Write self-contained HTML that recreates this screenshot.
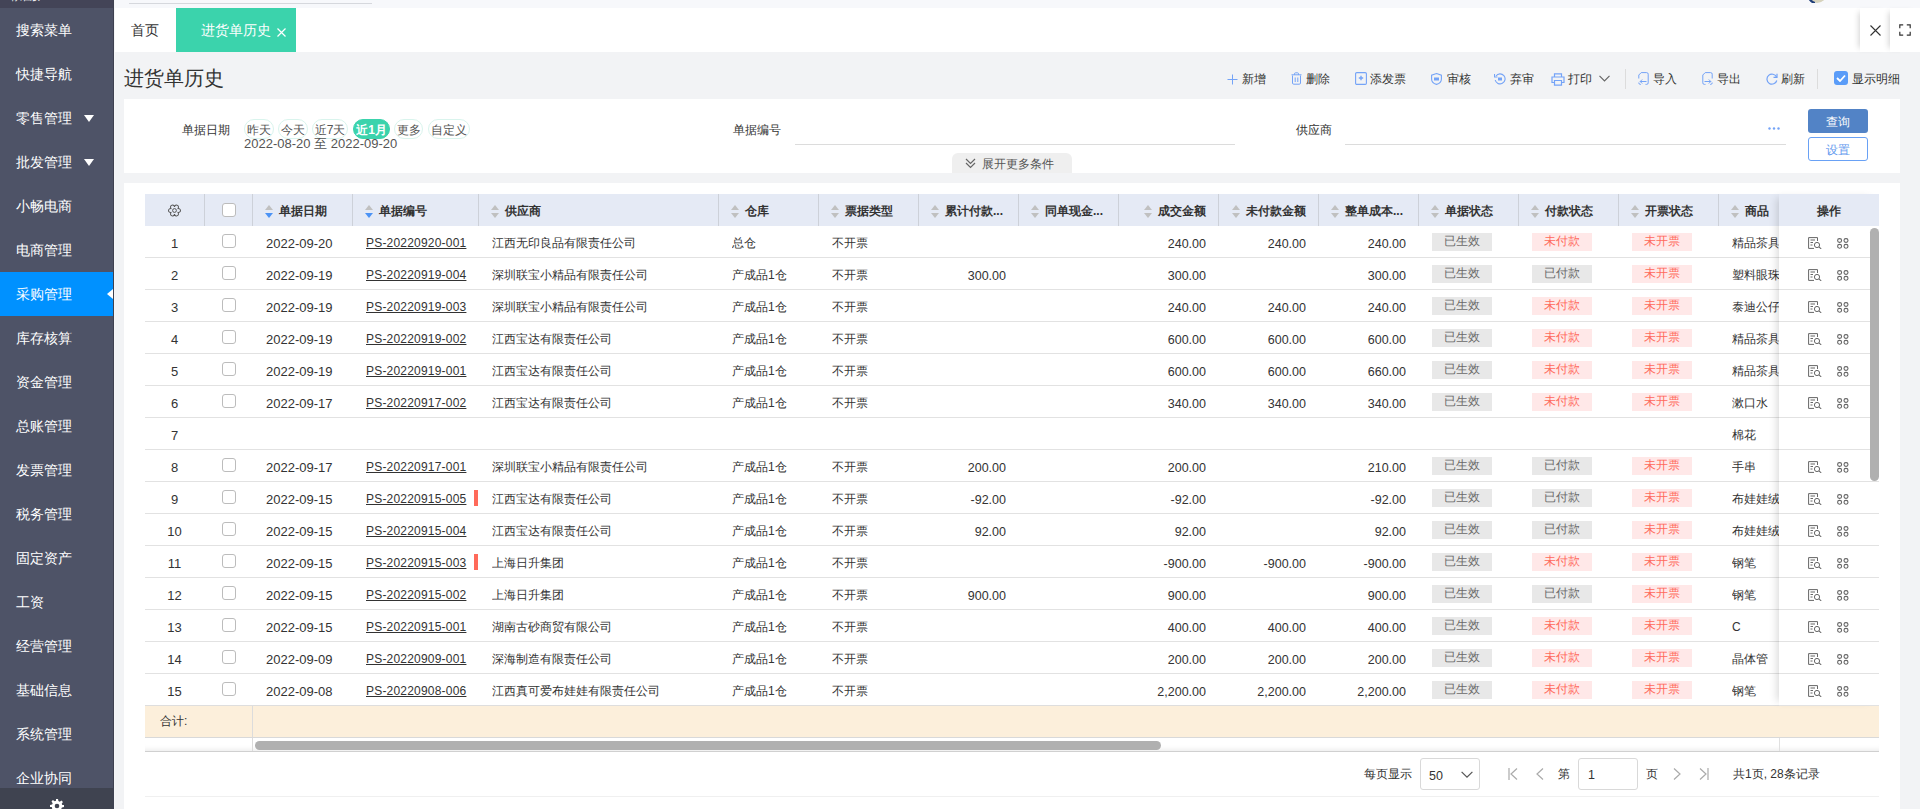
<!DOCTYPE html><html><head><meta charset="utf-8"><style>
*{box-sizing:border-box;margin:0;padding:0}
html,body{width:1920px;height:809px;overflow:hidden}
body{position:relative;background:#f2f3f5;font-family:"Liberation Sans",sans-serif;color:#333;font-size:12px}
.abs{position:absolute}
#side{left:0;top:0;width:114px;height:809px;background:#4e5367;border-right:1px solid #3e4150}
#side .top{left:0;top:0;width:113px;height:8px;background:#434457;overflow:hidden}
#side .top span{position:absolute;left:10px;top:-9px;color:#fff;font-size:10px;line-height:12px}
.mi{position:absolute;left:0;width:113px;height:44px;color:#fff;font-size:14px;line-height:44px;padding-left:16px}
.mi.on{background:#0091ff}
.mi .dd{position:absolute;left:84px;top:19px;width:0;height:0;border-left:5px solid transparent;border-right:5px solid transparent;border-top:7px solid #fff}
.mi .ar{position:absolute;right:0;top:17px;width:0;height:0;border-top:5px solid transparent;border-bottom:5px solid transparent;border-right:6px solid #fff}
#side .bot{left:0;top:788px;width:113px;height:21px;background:#3f4350}
#wl{left:114px;top:0;width:1px;height:809px;background:#f4f5f7}
#hdr{left:115px;top:0;width:1805px;height:8px;background:#f7f8fb}
#hdr .ln{left:14px;top:3px;width:243px;height:1px;background:#d6d8dd}
#tabs{left:115px;top:8px;width:1805px;height:44px;background:#fff}
.tab{position:absolute;top:0;height:44px;line-height:44px;font-size:14px}
.toolbar{top:67px;height:24px;font-size:12px;line-height:24px}
.tb{position:absolute;top:0;height:24px;white-space:nowrap}
.tb span{position:absolute;top:0}
#search{left:124px;top:99px;width:1776px;height:74px;background:#fff}
.lbl{position:absolute;font-size:12px;line-height:16px;color:#333}
.pill{position:absolute;top:20px;height:20px;border:1px solid #d9f4ed;border-radius:10px;font-size:12px;line-height:21px;color:#555;text-align:center}
.pill.on{background:#3bd3ac;border-color:#3bd3ac;color:#fff;font-weight:bold}
.uline{position:absolute;height:1px;background:#dcdcdc}
#card{left:124px;top:183px;width:1776px;height:626px;background:#fff}
#tbl{left:145px;top:194px;width:1734px;height:558px;overflow:hidden}
.th{position:absolute;top:0;height:32px;background:#e5eaf5;font-weight:bold;font-size:12px;line-height:32px;color:#333;white-space:nowrap;overflow:hidden}
.th .sep{position:absolute;left:0;top:0;width:1px;height:32px;background:#cdd1d9}
.sa{position:absolute;top:11px;width:8px;height:13px}
.sa:before{content:"";position:absolute;left:0;top:0;border-left:4px solid transparent;border-right:4px solid transparent;border-bottom:5px solid #c0c0c0}
.sa:after{content:"";position:absolute;left:0;top:8px;border-left:4px solid transparent;border-right:4px solid transparent;border-top:5px solid #c0c0c0}
.sa.b:after{border-top-color:#4c93f5}
.row{position:absolute;left:0;width:1734px;height:32px;border-bottom:1px solid #e2e2e2}
.c{position:absolute;top:3px;height:29px;line-height:29px;font-size:12px;color:#333;white-space:nowrap;overflow:hidden}
.num{font-size:13px}
.lnk{text-decoration:underline}
.cb{position:absolute;width:14px;height:14px;border:1px solid #bcbcbc;border-radius:3px;background:#fff}
.tag{position:absolute;top:7px;width:60px;height:18px;line-height:17px;text-align:center;font-size:12px}
.tg{background:#e8e8e8;color:#6a6a6a}
.tr{background:#ffe8e8;color:#ff6a5c}
#fix{left:1779px;top:194px;width:100px;height:511px;background:#fff;box-shadow:-6px 0 8px -4px rgba(0,0,0,0.15)}
</style></head><body><div id="side" class="abs"><div class="top abs"><span>标准版</span></div><div class="mi" style="top:8px">搜索菜单</div><div class="mi" style="top:52px">快捷导航</div><div class="mi" style="top:96px">零售管理<i class="dd"></i></div><div class="mi" style="top:140px">批发管理<i class="dd"></i></div><div class="mi" style="top:184px">小畅电商</div><div class="mi" style="top:228px">电商管理</div><div class="mi on" style="top:272px">采购管理<i class="ar"></i></div><div class="mi" style="top:316px">库存核算</div><div class="mi" style="top:360px">资金管理</div><div class="mi" style="top:404px">总账管理</div><div class="mi" style="top:448px">发票管理</div><div class="mi" style="top:492px">税务管理</div><div class="mi" style="top:536px">固定资产</div><div class="mi" style="top:580px">工资</div><div class="mi" style="top:624px">经营管理</div><div class="mi" style="top:668px">基础信息</div><div class="mi" style="top:712px">系统管理</div><div class="mi" style="top:756px">企业协同</div><div class="bot abs"><svg class="abs" style="left:50px;top:11px" width="14" height="14" viewBox="0 0 14 14"><path fill="#fff" d="M6 0h2l.4 2.1 1.3.6 1.8-1.2 1.4 1.4-1.2 1.8.6 1.3L14 6v2l-2.1.4-.6 1.3 1.2 1.8-1.4 1.4-1.8-1.2-1.3.6L8 14H6l-.4-2.1-1.3-.6-1.8 1.2-1.4-1.4 1.2-1.8-.6-1.3L0 8V6l2.1-.4.6-1.3-1.2-1.8 1.4-1.4 1.8 1.2 1.3-.6z"/><circle cx="7" cy="7" r="2.3" fill="#3f4350"/></svg></div></div><div id="wl" class="abs"></div><div id="hdr" class="abs"><div class="ln abs"></div></div><svg class="abs" style="left:1807px;top:-16px" width="20" height="19"><circle cx="10" cy="9.5" r="9.5" fill="#d6d2bc"/><path d="M2.5 15 Q5 18.5 8 19" stroke="#1f3e78" stroke-width="2.2" fill="none"/></svg><div id="tabs" class="abs"><div class="tab" style="left:16px;width:50px;color:#333">首页</div><div class="tab" style="left:61px;width:120px;background:#3bd3ac;color:#fff;padding-left:25px">进货单历史<svg class="abs" style="left:101px;top:20px" width="9" height="9"><path d="M0.5 0.5L8.5 8.5M8.5 0.5L0.5 8.5" stroke="#fff" stroke-width="1.2"/></svg></div><div class="abs" style="left:1745px;top:0;width:30px;height:44px;background:#fff;box-shadow:-5px 0 6px -4px rgba(0,0,0,.18)"><svg class="abs" style="left:10px;top:17px" width="11" height="11"><path d="M0.5 0.5L10.5 10.5M10.5 0.5L0.5 10.5" stroke="#333" stroke-width="1.1"/></svg></div><div class="abs" style="left:1775px;top:0;width:30px;height:44px;background:#fff;box-shadow:-5px 0 6px -4px rgba(0,0,0,.18)"><svg class="abs" style="left:9px;top:16px" width="12" height="12"><path d="M0.8 4.2V0.8H4.2M7.8 0.8H11.2V4.2M11.2 7.8V11.2H7.8M4.2 11.2H0.8V7.8" stroke="#333" stroke-width="1.2" fill="none"/></svg></div></div><div class="abs" style="left:124px;top:63px;font-size:20px;line-height:30px;color:#333">进货单历史</div><div class="abs toolbar" style="left:0;width:1920px"><div class="tb" style="left:0"><span style="left:1227px;top:7px;line-height:0"><svg width="11" height="11" viewBox="0 0 11 11"><path d="M5.5 0.5V10.5M0.5 5.5H10.5" stroke="#74a3f7" stroke-width="1"/></svg></span><span style="left:1242px">新增</span></div><div class="tb" style="left:0"><span style="left:1291px;top:5px;line-height:0"><svg width="11" height="13" viewBox="0 0 11 13"><path d="M1.5 3.5V11A1.2 1.2 0 0 0 2.7 12.2H8.3A1.2 1.2 0 0 0 9.5 11V3.5 M0.5 2.8H10.5 M3.5 2.8V1.8A1 1 0 0 1 4.5 0.8H6.5A1 1 0 0 1 7.5 1.8V2.8 M4.2 5.5V10 M6.8 5.5V10" stroke="#74a3f7" stroke-width="1" fill="none"/></svg></span><span style="left:1306px">删除</span></div><div class="tb" style="left:0"><span style="left:1355px;top:5px;line-height:0"><svg width="12" height="13" viewBox="0 0 12 13"><rect x="0.6" y="0.6" width="10.8" height="11.8" rx="1.2" stroke="#74a3f7" stroke-width="1.1" fill="none"/><path d="M6 3.8V8.2 M3.8 6H8.2" stroke="#74a3f7" stroke-width="1.4" fill="none"/></svg></span><span style="left:1370px">添发票</span></div><div class="tb" style="left:0"><span style="left:1431px;top:6px;line-height:0"><svg width="11" height="12" viewBox="0 0 11 12"><path d="M5.5 0.6L10.4 2.2V6C10.4 8.8 8 10.8 5.5 11.4C3 10.8 0.6 8.8 0.6 6V2.2Z" stroke="#74a3f7" stroke-width="1.1" fill="none"/><path d="M3 4.5H8V7.5H3Z" fill="#74a3f7"/></svg></span><span style="left:1447px">审核</span></div><div class="tb" style="left:0"><span style="left:1494px;top:6px;line-height:0"><svg width="12" height="12" viewBox="0 0 12 12"><path d="M2 3A5 5 0 1 1 1.2 7" stroke="#74a3f7" stroke-width="1.1" fill="none"/><path d="M0.5 1V4H3.5" stroke="#74a3f7" stroke-width="1.1" fill="none"/><path d="M4 4.5H8V7.5H4Z" fill="#74a3f7"/></svg></span><span style="left:1510px">弃审</span></div><div class="tb" style="left:0"><span style="left:1551px;top:6px;line-height:0"><svg width="14" height="13" viewBox="0 0 14 13"><path d="M3.5 4V0.8H10.5V4 M3.5 9.5H1V4H13V9.5H10.5 M3.5 7.5H10.5V12.2H3.5Z" stroke="#74a3f7" stroke-width="1.2" fill="none"/></svg></span><span style="left:1568px">打印</span></div><div class="tb" style="left:0"><span style="left:1638px;top:5px;line-height:0"><svg width="11" height="13" viewBox="0 0 11 13"><path d="M3.2 0.6H8.6A1.6 1.6 0 0 1 10.2 2.2V10.8A1.6 1.6 0 0 1 8.6 12.4H7.5 M3.2 0.6L0.8 3V6.5 M0.8 10.5V10.8A1.6 1.6 0 0 0 2.4 12.4H3" stroke="#74a3f7" stroke-width="1" fill="none"/><path d="M8.5 9.5H2.2M4.2 7.5L2.2 9.5L4.2 11.5" stroke="#74a3f7" stroke-width="1" fill="none"/></svg></span><span style="left:1653px">导入</span></div><div class="tb" style="left:0"><span style="left:1702px;top:5px;line-height:0"><svg width="11" height="13" viewBox="0 0 11 13"><path d="M3.2 0.6H8.6A1.6 1.6 0 0 1 10.2 2.2V6.5 M10.2 10.5V10.8A1.6 1.6 0 0 1 8.6 12.4H8 M3.2 0.6L0.8 3V10.8A1.6 1.6 0 0 0 2.4 12.4H3.5" stroke="#74a3f7" stroke-width="1" fill="none"/><path d="M2.5 9.5H8.8M6.8 7.5L8.8 9.5L6.8 11.5" stroke="#74a3f7" stroke-width="1" fill="none"/></svg></span><span style="left:1717px">导出</span></div><div class="tb" style="left:0"><span style="left:1766px;top:6px;line-height:0"><svg width="12" height="12" viewBox="0 0 12 12"><path d="M10.5 4A5 5 0 1 0 10.8 7.5" stroke="#74a3f7" stroke-width="1.2" fill="none"/><path d="M11 0.8V4.3H7.5" stroke="#74a3f7" stroke-width="1.2" fill="none"/></svg></span><span style="left:1781px">刷新</span></div><svg class="abs" style="left:1599px;top:8px" width="11" height="7"><path d="M0.5 0.8L5.5 5.8L10.5 0.8" stroke="#666" stroke-width="1.2" fill="none"/></svg><div class="abs" style="left:1625px;top:2px;width:1px;height:20px;background:#dcdcdc"></div><div class="abs" style="left:1817px;top:2px;width:1px;height:20px;background:#dcdcdc"></div><div class="abs" style="left:1834px;top:4px;width:14px;height:14px;background:#5a9cf8;border-radius:3px"><svg class="abs" style="left:2px;top:3px" width="10" height="8"><path d="M1 4L4 7L9 1.5" stroke="#fff" stroke-width="1.8" fill="none"/></svg></div><span class="abs" style="left:1852px;top:0">显示明细</span></div><div id="search" class="abs"><div class="lbl" style="left:58px;top:23px">单据日期</div><div class="pill" style="left:120px;width:30px">昨天</div><div class="pill" style="left:154px;width:30px">今天</div><div class="pill" style="left:188px;width:36px">近7天</div><div class="pill on" style="left:229px;width:37px">近1月</div><div class="pill" style="left:270px;width:29px">更多</div><div class="pill" style="left:304px;width:42px">自定义</div><div class="abs" style="left:120px;top:37px;font-size:13px;line-height:16px;color:#555">2022-08-20 至 2022-09-20</div><div class="lbl" style="left:609px;top:23px">单据编号</div><div class="uline" style="left:671px;top:45px;width:440px"></div><div class="lbl" style="left:1172px;top:23px">供应商</div><div class="uline" style="left:1221px;top:45px;width:441px"></div><div class="abs" style="left:1644px;top:28px;width:12px;height:3px"><svg width="12" height="3" style="display:block"><circle cx="1.5" cy="1.5" r="1.2" fill="#74a3f7"/><circle cx="6" cy="1.5" r="1.2" fill="#74a3f7"/><circle cx="10.5" cy="1.5" r="1.2" fill="#74a3f7"/></svg></div><div class="abs" style="left:1684px;top:10px;width:60px;height:24px;background:#5283c6;border-radius:3px;color:#fff;font-size:12px;line-height:26px;text-align:center">查询</div><div class="abs" style="left:1684px;top:38px;width:60px;height:24px;border:1px solid #69a1f5;border-radius:3px;color:#5f98ee;font-size:12px;line-height:25px;text-align:center">设置</div><div class="abs" style="left:828px;top:54px;width:120px;height:20px;background:#efefef;border-radius:6px 6px 0 0;font-size:12px;line-height:20px;color:#555"><svg class="abs" style="left:13px;top:5px" width="11" height="11"><path d="M1 1L5.5 5.5L10 1M1 5L5.5 9.5L10 5" stroke="#666" stroke-width="1.2" fill="none"/></svg><span class="abs" style="left:30px;top:1px">展开更多条件</span></div></div><div id="card" class="abs"></div><div id="tbl" class="abs"><div class="th" style="left:0px;width:59px"><svg class="abs" style="left:23px;top:10px" width="13" height="13" viewBox="0 0 13 13"><path d="M4.70 3.38A2.0 2.0 0 1 1 8.30 3.38A2.0 2.0 0 1 1 10.10 6.50A2.0 2.0 0 1 1 8.30 9.62A2.0 2.0 0 1 1 4.70 9.62A2.0 2.0 0 1 1 2.90 6.50A2.0 2.0 0 1 1 4.70 3.38Z" transform="rotate(30 6.5 6.5)" stroke="#555" stroke-width="1" fill="none"/><circle cx="6.5" cy="6.5" r="1.9" stroke="#555" stroke-width="1" fill="none"/></svg></div><div class="th" style="left:59px;width:48px"><i class="sep"></i><i class="cb" style="left:18px;top:9px"></i></div><div class="th" style="left:107px;width:100px"><i class="sep"></i><i class="sa b" style="left:13px"></i><span class="abs" style="left:27px;top:1px">单据日期</span></div><div class="th" style="left:207px;width:126px"><i class="sep"></i><i class="sa b" style="left:13px"></i><span class="abs" style="left:27px;top:1px">单据编号</span></div><div class="th" style="left:333px;width:240px"><i class="sep"></i><i class="sa" style="left:13px"></i><span class="abs" style="left:27px;top:1px">供应商</span></div><div class="th" style="left:573px;width:100px"><i class="sep"></i><i class="sa" style="left:13px"></i><span class="abs" style="left:27px;top:1px">仓库</span></div><div class="th" style="left:673px;width:100px"><i class="sep"></i><i class="sa" style="left:13px"></i><span class="abs" style="left:27px;top:1px">票据类型</span></div><div class="th" style="left:773px;width:100px"><i class="sep"></i><i class="sa" style="left:13px"></i><span class="abs" style="left:27px;top:1px">累计付款...</span></div><div class="th" style="left:873px;width:100px"><i class="sep"></i><i class="sa" style="left:13px"></i><span class="abs" style="left:27px;top:1px">同单现金...</span></div><div class="th" style="left:973px;width:100px"><i class="sep"></i><i class="sa" style="left:26px"></i><span class="abs" style="left:40px;top:1px">成交金额</span></div><div class="th" style="left:1073px;width:100px"><i class="sep"></i><i class="sa" style="left:14px"></i><span class="abs" style="left:28px;top:1px">未付款金额</span></div><div class="th" style="left:1173px;width:100px"><i class="sep"></i><i class="sa" style="left:13px"></i><span class="abs" style="left:27px;top:1px">整单成本...</span></div><div class="th" style="left:1273px;width:100px"><i class="sep"></i><i class="sa" style="left:13px"></i><span class="abs" style="left:27px;top:1px">单据状态</span></div><div class="th" style="left:1373px;width:100px"><i class="sep"></i><i class="sa" style="left:13px"></i><span class="abs" style="left:27px;top:1px">付款状态</span></div><div class="th" style="left:1473px;width:100px"><i class="sep"></i><i class="sa" style="left:13px"></i><span class="abs" style="left:27px;top:1px">开票状态</span></div><div class="th" style="left:1573px;width:100px"><i class="sep"></i><i class="sa" style="left:13px"></i><span class="abs" style="left:27px;top:1px">商品</span></div><div class="row" style="top:32px"><div class="c num" style="left:0;width:59px;text-align:center">1</div><i class="cb" style="left:77px;top:8px"></i><div class="c num" style="left:121px;width:86px">2022-09-20</div><div class="c lnk" style="left:221px;width:105px;letter-spacing:0.2px">PS-20220920-001</div><div class="c" style="left:347px;width:220px">江西无印良品有限责任公司</div><div class="c" style="left:587px;width:80px">总仓</div><div class="c" style="left:687px;width:80px">不开票</div><div class="c num" style="left:973px;width:88px;text-align:right;font-size:12.5px;top:4px">240.00</div><div class="c num" style="left:1073px;width:88px;text-align:right;font-size:12.5px;top:4px">240.00</div><div class="c num" style="left:1173px;width:88px;text-align:right;font-size:12.5px;top:4px">240.00</div><div class="tag tg" style="left:1287px">已生效</div><div class="tag tr" style="left:1387px">未付款</div><div class="tag tr" style="left:1487px">未开票</div><div class="c" style="left:1587px;width:47px">精品茶具</div></div><div class="row" style="top:64px"><div class="c num" style="left:0;width:59px;text-align:center">2</div><i class="cb" style="left:77px;top:8px"></i><div class="c num" style="left:121px;width:86px">2022-09-19</div><div class="c lnk" style="left:221px;width:105px;letter-spacing:0.2px">PS-20220919-004</div><div class="c" style="left:347px;width:220px">深圳联宝小精品有限责任公司</div><div class="c" style="left:587px;width:80px">产成品1仓</div><div class="c" style="left:687px;width:80px">不开票</div><div class="c num" style="left:773px;width:88px;text-align:right;font-size:12.5px;top:4px">300.00</div><div class="c num" style="left:973px;width:88px;text-align:right;font-size:12.5px;top:4px">300.00</div><div class="c num" style="left:1173px;width:88px;text-align:right;font-size:12.5px;top:4px">300.00</div><div class="tag tg" style="left:1287px">已生效</div><div class="tag tg" style="left:1387px">已付款</div><div class="tag tr" style="left:1487px">未开票</div><div class="c" style="left:1587px;width:47px">塑料眼珠</div></div><div class="row" style="top:96px"><div class="c num" style="left:0;width:59px;text-align:center">3</div><i class="cb" style="left:77px;top:8px"></i><div class="c num" style="left:121px;width:86px">2022-09-19</div><div class="c lnk" style="left:221px;width:105px;letter-spacing:0.2px">PS-20220919-003</div><div class="c" style="left:347px;width:220px">深圳联宝小精品有限责任公司</div><div class="c" style="left:587px;width:80px">产成品1仓</div><div class="c" style="left:687px;width:80px">不开票</div><div class="c num" style="left:973px;width:88px;text-align:right;font-size:12.5px;top:4px">240.00</div><div class="c num" style="left:1073px;width:88px;text-align:right;font-size:12.5px;top:4px">240.00</div><div class="c num" style="left:1173px;width:88px;text-align:right;font-size:12.5px;top:4px">240.00</div><div class="tag tg" style="left:1287px">已生效</div><div class="tag tr" style="left:1387px">未付款</div><div class="tag tr" style="left:1487px">未开票</div><div class="c" style="left:1587px;width:47px">泰迪公仔</div></div><div class="row" style="top:128px"><div class="c num" style="left:0;width:59px;text-align:center">4</div><i class="cb" style="left:77px;top:8px"></i><div class="c num" style="left:121px;width:86px">2022-09-19</div><div class="c lnk" style="left:221px;width:105px;letter-spacing:0.2px">PS-20220919-002</div><div class="c" style="left:347px;width:220px">江西宝达有限责任公司</div><div class="c" style="left:587px;width:80px">产成品1仓</div><div class="c" style="left:687px;width:80px">不开票</div><div class="c num" style="left:973px;width:88px;text-align:right;font-size:12.5px;top:4px">600.00</div><div class="c num" style="left:1073px;width:88px;text-align:right;font-size:12.5px;top:4px">600.00</div><div class="c num" style="left:1173px;width:88px;text-align:right;font-size:12.5px;top:4px">600.00</div><div class="tag tg" style="left:1287px">已生效</div><div class="tag tr" style="left:1387px">未付款</div><div class="tag tr" style="left:1487px">未开票</div><div class="c" style="left:1587px;width:47px">精品茶具</div></div><div class="row" style="top:160px"><div class="c num" style="left:0;width:59px;text-align:center">5</div><i class="cb" style="left:77px;top:8px"></i><div class="c num" style="left:121px;width:86px">2022-09-19</div><div class="c lnk" style="left:221px;width:105px;letter-spacing:0.2px">PS-20220919-001</div><div class="c" style="left:347px;width:220px">江西宝达有限责任公司</div><div class="c" style="left:587px;width:80px">产成品1仓</div><div class="c" style="left:687px;width:80px">不开票</div><div class="c num" style="left:973px;width:88px;text-align:right;font-size:12.5px;top:4px">600.00</div><div class="c num" style="left:1073px;width:88px;text-align:right;font-size:12.5px;top:4px">600.00</div><div class="c num" style="left:1173px;width:88px;text-align:right;font-size:12.5px;top:4px">660.00</div><div class="tag tg" style="left:1287px">已生效</div><div class="tag tr" style="left:1387px">未付款</div><div class="tag tr" style="left:1487px">未开票</div><div class="c" style="left:1587px;width:47px">精品茶具</div></div><div class="row" style="top:192px"><div class="c num" style="left:0;width:59px;text-align:center">6</div><i class="cb" style="left:77px;top:8px"></i><div class="c num" style="left:121px;width:86px">2022-09-17</div><div class="c lnk" style="left:221px;width:105px;letter-spacing:0.2px">PS-20220917-002</div><div class="c" style="left:347px;width:220px">江西宝达有限责任公司</div><div class="c" style="left:587px;width:80px">产成品1仓</div><div class="c" style="left:687px;width:80px">不开票</div><div class="c num" style="left:973px;width:88px;text-align:right;font-size:12.5px;top:4px">340.00</div><div class="c num" style="left:1073px;width:88px;text-align:right;font-size:12.5px;top:4px">340.00</div><div class="c num" style="left:1173px;width:88px;text-align:right;font-size:12.5px;top:4px">340.00</div><div class="tag tg" style="left:1287px">已生效</div><div class="tag tr" style="left:1387px">未付款</div><div class="tag tr" style="left:1487px">未开票</div><div class="c" style="left:1587px;width:47px">漱口水</div></div><div class="row" style="top:224px"><div class="c num" style="left:0;width:59px;text-align:center">7</div><div class="c" style="left:1587px;width:60px">棉花</div></div><div class="row" style="top:256px"><div class="c num" style="left:0;width:59px;text-align:center">8</div><i class="cb" style="left:77px;top:8px"></i><div class="c num" style="left:121px;width:86px">2022-09-17</div><div class="c lnk" style="left:221px;width:105px;letter-spacing:0.2px">PS-20220917-001</div><div class="c" style="left:347px;width:220px">深圳联宝小精品有限责任公司</div><div class="c" style="left:587px;width:80px">产成品1仓</div><div class="c" style="left:687px;width:80px">不开票</div><div class="c num" style="left:773px;width:88px;text-align:right;font-size:12.5px;top:4px">200.00</div><div class="c num" style="left:973px;width:88px;text-align:right;font-size:12.5px;top:4px">200.00</div><div class="c num" style="left:1173px;width:88px;text-align:right;font-size:12.5px;top:4px">210.00</div><div class="tag tg" style="left:1287px">已生效</div><div class="tag tg" style="left:1387px">已付款</div><div class="tag tr" style="left:1487px">未开票</div><div class="c" style="left:1587px;width:47px">手串</div></div><div class="row" style="top:288px"><div class="c num" style="left:0;width:59px;text-align:center">9</div><i class="cb" style="left:77px;top:8px"></i><div class="c num" style="left:121px;width:86px">2022-09-15</div><div class="c lnk" style="left:221px;width:105px;letter-spacing:0.2px">PS-20220915-005</div><i class="abs" style="left:329px;top:8px;width:4px;height:16px;background:#ff6a5a"></i><div class="c" style="left:347px;width:220px">江西宝达有限责任公司</div><div class="c" style="left:587px;width:80px">产成品1仓</div><div class="c" style="left:687px;width:80px">不开票</div><div class="c num" style="left:773px;width:88px;text-align:right;font-size:12.5px;top:4px">-92.00</div><div class="c num" style="left:973px;width:88px;text-align:right;font-size:12.5px;top:4px">-92.00</div><div class="c num" style="left:1173px;width:88px;text-align:right;font-size:12.5px;top:4px">-92.00</div><div class="tag tg" style="left:1287px">已生效</div><div class="tag tg" style="left:1387px">已付款</div><div class="tag tr" style="left:1487px">未开票</div><div class="c" style="left:1587px;width:47px">布娃娃绒</div></div><div class="row" style="top:320px"><div class="c num" style="left:0;width:59px;text-align:center">10</div><i class="cb" style="left:77px;top:8px"></i><div class="c num" style="left:121px;width:86px">2022-09-15</div><div class="c lnk" style="left:221px;width:105px;letter-spacing:0.2px">PS-20220915-004</div><div class="c" style="left:347px;width:220px">江西宝达有限责任公司</div><div class="c" style="left:587px;width:80px">产成品1仓</div><div class="c" style="left:687px;width:80px">不开票</div><div class="c num" style="left:773px;width:88px;text-align:right;font-size:12.5px;top:4px">92.00</div><div class="c num" style="left:973px;width:88px;text-align:right;font-size:12.5px;top:4px">92.00</div><div class="c num" style="left:1173px;width:88px;text-align:right;font-size:12.5px;top:4px">92.00</div><div class="tag tg" style="left:1287px">已生效</div><div class="tag tg" style="left:1387px">已付款</div><div class="tag tr" style="left:1487px">未开票</div><div class="c" style="left:1587px;width:47px">布娃娃绒</div></div><div class="row" style="top:352px"><div class="c num" style="left:0;width:59px;text-align:center">11</div><i class="cb" style="left:77px;top:8px"></i><div class="c num" style="left:121px;width:86px">2022-09-15</div><div class="c lnk" style="left:221px;width:105px;letter-spacing:0.2px">PS-20220915-003</div><i class="abs" style="left:329px;top:8px;width:4px;height:16px;background:#ff6a5a"></i><div class="c" style="left:347px;width:220px">上海日升集团</div><div class="c" style="left:587px;width:80px">产成品1仓</div><div class="c" style="left:687px;width:80px">不开票</div><div class="c num" style="left:973px;width:88px;text-align:right;font-size:12.5px;top:4px">-900.00</div><div class="c num" style="left:1073px;width:88px;text-align:right;font-size:12.5px;top:4px">-900.00</div><div class="c num" style="left:1173px;width:88px;text-align:right;font-size:12.5px;top:4px">-900.00</div><div class="tag tg" style="left:1287px">已生效</div><div class="tag tr" style="left:1387px">未付款</div><div class="tag tr" style="left:1487px">未开票</div><div class="c" style="left:1587px;width:47px">钢笔</div></div><div class="row" style="top:384px"><div class="c num" style="left:0;width:59px;text-align:center">12</div><i class="cb" style="left:77px;top:8px"></i><div class="c num" style="left:121px;width:86px">2022-09-15</div><div class="c lnk" style="left:221px;width:105px;letter-spacing:0.2px">PS-20220915-002</div><div class="c" style="left:347px;width:220px">上海日升集团</div><div class="c" style="left:587px;width:80px">产成品1仓</div><div class="c" style="left:687px;width:80px">不开票</div><div class="c num" style="left:773px;width:88px;text-align:right;font-size:12.5px;top:4px">900.00</div><div class="c num" style="left:973px;width:88px;text-align:right;font-size:12.5px;top:4px">900.00</div><div class="c num" style="left:1173px;width:88px;text-align:right;font-size:12.5px;top:4px">900.00</div><div class="tag tg" style="left:1287px">已生效</div><div class="tag tg" style="left:1387px">已付款</div><div class="tag tr" style="left:1487px">未开票</div><div class="c" style="left:1587px;width:47px">钢笔</div></div><div class="row" style="top:416px"><div class="c num" style="left:0;width:59px;text-align:center">13</div><i class="cb" style="left:77px;top:8px"></i><div class="c num" style="left:121px;width:86px">2022-09-15</div><div class="c lnk" style="left:221px;width:105px;letter-spacing:0.2px">PS-20220915-001</div><div class="c" style="left:347px;width:220px">湖南古砂商贸有限公司</div><div class="c" style="left:587px;width:80px">产成品1仓</div><div class="c" style="left:687px;width:80px">不开票</div><div class="c num" style="left:973px;width:88px;text-align:right;font-size:12.5px;top:4px">400.00</div><div class="c num" style="left:1073px;width:88px;text-align:right;font-size:12.5px;top:4px">400.00</div><div class="c num" style="left:1173px;width:88px;text-align:right;font-size:12.5px;top:4px">400.00</div><div class="tag tg" style="left:1287px">已生效</div><div class="tag tr" style="left:1387px">未付款</div><div class="tag tr" style="left:1487px">未开票</div><div class="c" style="left:1587px;width:47px">C</div></div><div class="row" style="top:448px"><div class="c num" style="left:0;width:59px;text-align:center">14</div><i class="cb" style="left:77px;top:8px"></i><div class="c num" style="left:121px;width:86px">2022-09-09</div><div class="c lnk" style="left:221px;width:105px;letter-spacing:0.2px">PS-20220909-001</div><div class="c" style="left:347px;width:220px">深海制造有限责任公司</div><div class="c" style="left:587px;width:80px">产成品1仓</div><div class="c" style="left:687px;width:80px">不开票</div><div class="c num" style="left:973px;width:88px;text-align:right;font-size:12.5px;top:4px">200.00</div><div class="c num" style="left:1073px;width:88px;text-align:right;font-size:12.5px;top:4px">200.00</div><div class="c num" style="left:1173px;width:88px;text-align:right;font-size:12.5px;top:4px">200.00</div><div class="tag tg" style="left:1287px">已生效</div><div class="tag tr" style="left:1387px">未付款</div><div class="tag tr" style="left:1487px">未开票</div><div class="c" style="left:1587px;width:47px">晶体管</div></div><div class="row" style="top:480px"><div class="c num" style="left:0;width:59px;text-align:center">15</div><i class="cb" style="left:77px;top:8px"></i><div class="c num" style="left:121px;width:86px">2022-09-08</div><div class="c lnk" style="left:221px;width:105px;letter-spacing:0.2px">PS-20220908-006</div><div class="c" style="left:347px;width:220px">江西真可爱布娃娃有限责任公司</div><div class="c" style="left:587px;width:80px">产成品1仓</div><div class="c" style="left:687px;width:80px">不开票</div><div class="c num" style="left:973px;width:88px;text-align:right;font-size:12.5px;top:4px">2,200.00</div><div class="c num" style="left:1073px;width:88px;text-align:right;font-size:12.5px;top:4px">2,200.00</div><div class="c num" style="left:1173px;width:88px;text-align:right;font-size:12.5px;top:4px">2,200.00</div><div class="tag tg" style="left:1287px">已生效</div><div class="tag tr" style="left:1387px">未付款</div><div class="tag tr" style="left:1487px">未开票</div><div class="c" style="left:1587px;width:47px">钢笔</div></div><div class="abs" style="left:0;top:511px;width:1734px;height:33px;background:#fcefdb;border-top:1px solid #dedede;border-bottom:1px solid #d9d9d9"><div class="abs" style="left:107px;top:0;width:1px;height:31px;background:#dcdcdc"></div><span class="abs" style="left:15px;top:0;line-height:31px;font-size:12px">合计:</span></div><div class="abs" style="left:0;top:544px;width:1734px;height:14px;background:#fff;border-bottom:1px solid #d0d0d0;box-shadow:inset 0 -6px 6px -6px rgba(0,0,0,.12)"><div class="abs" style="left:107px;top:0;width:1px;height:13px;background:#dcdcdc"></div><div class="abs" style="left:110px;top:3px;width:906px;height:9px;background:#b0b0b0;border-radius:5px"></div><div class="abs" style="left:1634px;top:0;width:1px;height:13px;background:#e0e0e0"></div></div></div><div id="fix" class="abs"><div class="abs" style="left:0;top:0;width:100px;height:32px;background:#e5eaf5;font-weight:bold;font-size:12px;line-height:34px;text-align:center">操作</div><div class="abs" style="left:0;top:32px;width:100px;height:32px;border-bottom:1px solid #e2e2e2"><span class="abs" style="left:29px;top:11px;line-height:0"><svg width="14" height="12" viewBox="0 0 14 12"><path d="M9.5 4V0.6H0.6V11.4H6 M2.5 3H7 M2.5 5.5H5 M2.5 8H4.5" stroke="#666" stroke-width="1" fill="none"/><circle cx="9" cy="8" r="2.6" stroke="#666" stroke-width="1" fill="none"/><path d="M10.9 9.9L13.2 11.8" stroke="#666" stroke-width="1.1"/></svg></span><span class="abs" style="left:58px;top:12px;line-height:0"><svg width="12" height="11" viewBox="0 0 12 11"><rect x="0.6" y="0.6" width="4" height="3.8" rx="1.9" stroke="#666" stroke-width="1.1" fill="none"/><rect x="7" y="0.6" width="4" height="3.8" rx="1.9" stroke="#666" stroke-width="1.1" fill="none"/><rect x="0.6" y="6.4" width="4" height="3.8" rx="1.9" stroke="#666" stroke-width="1.1" fill="none"/><rect x="7" y="6.4" width="4" height="3.8" rx="1.9" stroke="#666" stroke-width="1.1" fill="none"/></svg></span></div><div class="abs" style="left:0;top:64px;width:100px;height:32px;border-bottom:1px solid #e2e2e2"><span class="abs" style="left:29px;top:11px;line-height:0"><svg width="14" height="12" viewBox="0 0 14 12"><path d="M9.5 4V0.6H0.6V11.4H6 M2.5 3H7 M2.5 5.5H5 M2.5 8H4.5" stroke="#666" stroke-width="1" fill="none"/><circle cx="9" cy="8" r="2.6" stroke="#666" stroke-width="1" fill="none"/><path d="M10.9 9.9L13.2 11.8" stroke="#666" stroke-width="1.1"/></svg></span><span class="abs" style="left:58px;top:12px;line-height:0"><svg width="12" height="11" viewBox="0 0 12 11"><rect x="0.6" y="0.6" width="4" height="3.8" rx="1.9" stroke="#666" stroke-width="1.1" fill="none"/><rect x="7" y="0.6" width="4" height="3.8" rx="1.9" stroke="#666" stroke-width="1.1" fill="none"/><rect x="0.6" y="6.4" width="4" height="3.8" rx="1.9" stroke="#666" stroke-width="1.1" fill="none"/><rect x="7" y="6.4" width="4" height="3.8" rx="1.9" stroke="#666" stroke-width="1.1" fill="none"/></svg></span></div><div class="abs" style="left:0;top:96px;width:100px;height:32px;border-bottom:1px solid #e2e2e2"><span class="abs" style="left:29px;top:11px;line-height:0"><svg width="14" height="12" viewBox="0 0 14 12"><path d="M9.5 4V0.6H0.6V11.4H6 M2.5 3H7 M2.5 5.5H5 M2.5 8H4.5" stroke="#666" stroke-width="1" fill="none"/><circle cx="9" cy="8" r="2.6" stroke="#666" stroke-width="1" fill="none"/><path d="M10.9 9.9L13.2 11.8" stroke="#666" stroke-width="1.1"/></svg></span><span class="abs" style="left:58px;top:12px;line-height:0"><svg width="12" height="11" viewBox="0 0 12 11"><rect x="0.6" y="0.6" width="4" height="3.8" rx="1.9" stroke="#666" stroke-width="1.1" fill="none"/><rect x="7" y="0.6" width="4" height="3.8" rx="1.9" stroke="#666" stroke-width="1.1" fill="none"/><rect x="0.6" y="6.4" width="4" height="3.8" rx="1.9" stroke="#666" stroke-width="1.1" fill="none"/><rect x="7" y="6.4" width="4" height="3.8" rx="1.9" stroke="#666" stroke-width="1.1" fill="none"/></svg></span></div><div class="abs" style="left:0;top:128px;width:100px;height:32px;border-bottom:1px solid #e2e2e2"><span class="abs" style="left:29px;top:11px;line-height:0"><svg width="14" height="12" viewBox="0 0 14 12"><path d="M9.5 4V0.6H0.6V11.4H6 M2.5 3H7 M2.5 5.5H5 M2.5 8H4.5" stroke="#666" stroke-width="1" fill="none"/><circle cx="9" cy="8" r="2.6" stroke="#666" stroke-width="1" fill="none"/><path d="M10.9 9.9L13.2 11.8" stroke="#666" stroke-width="1.1"/></svg></span><span class="abs" style="left:58px;top:12px;line-height:0"><svg width="12" height="11" viewBox="0 0 12 11"><rect x="0.6" y="0.6" width="4" height="3.8" rx="1.9" stroke="#666" stroke-width="1.1" fill="none"/><rect x="7" y="0.6" width="4" height="3.8" rx="1.9" stroke="#666" stroke-width="1.1" fill="none"/><rect x="0.6" y="6.4" width="4" height="3.8" rx="1.9" stroke="#666" stroke-width="1.1" fill="none"/><rect x="7" y="6.4" width="4" height="3.8" rx="1.9" stroke="#666" stroke-width="1.1" fill="none"/></svg></span></div><div class="abs" style="left:0;top:160px;width:100px;height:32px;border-bottom:1px solid #e2e2e2"><span class="abs" style="left:29px;top:11px;line-height:0"><svg width="14" height="12" viewBox="0 0 14 12"><path d="M9.5 4V0.6H0.6V11.4H6 M2.5 3H7 M2.5 5.5H5 M2.5 8H4.5" stroke="#666" stroke-width="1" fill="none"/><circle cx="9" cy="8" r="2.6" stroke="#666" stroke-width="1" fill="none"/><path d="M10.9 9.9L13.2 11.8" stroke="#666" stroke-width="1.1"/></svg></span><span class="abs" style="left:58px;top:12px;line-height:0"><svg width="12" height="11" viewBox="0 0 12 11"><rect x="0.6" y="0.6" width="4" height="3.8" rx="1.9" stroke="#666" stroke-width="1.1" fill="none"/><rect x="7" y="0.6" width="4" height="3.8" rx="1.9" stroke="#666" stroke-width="1.1" fill="none"/><rect x="0.6" y="6.4" width="4" height="3.8" rx="1.9" stroke="#666" stroke-width="1.1" fill="none"/><rect x="7" y="6.4" width="4" height="3.8" rx="1.9" stroke="#666" stroke-width="1.1" fill="none"/></svg></span></div><div class="abs" style="left:0;top:192px;width:100px;height:32px;border-bottom:1px solid #e2e2e2"><span class="abs" style="left:29px;top:11px;line-height:0"><svg width="14" height="12" viewBox="0 0 14 12"><path d="M9.5 4V0.6H0.6V11.4H6 M2.5 3H7 M2.5 5.5H5 M2.5 8H4.5" stroke="#666" stroke-width="1" fill="none"/><circle cx="9" cy="8" r="2.6" stroke="#666" stroke-width="1" fill="none"/><path d="M10.9 9.9L13.2 11.8" stroke="#666" stroke-width="1.1"/></svg></span><span class="abs" style="left:58px;top:12px;line-height:0"><svg width="12" height="11" viewBox="0 0 12 11"><rect x="0.6" y="0.6" width="4" height="3.8" rx="1.9" stroke="#666" stroke-width="1.1" fill="none"/><rect x="7" y="0.6" width="4" height="3.8" rx="1.9" stroke="#666" stroke-width="1.1" fill="none"/><rect x="0.6" y="6.4" width="4" height="3.8" rx="1.9" stroke="#666" stroke-width="1.1" fill="none"/><rect x="7" y="6.4" width="4" height="3.8" rx="1.9" stroke="#666" stroke-width="1.1" fill="none"/></svg></span></div><div class="abs" style="left:0;top:224px;width:100px;height:32px;border-bottom:1px solid #e2e2e2"></div><div class="abs" style="left:0;top:256px;width:100px;height:32px;border-bottom:1px solid #e2e2e2"><span class="abs" style="left:29px;top:11px;line-height:0"><svg width="14" height="12" viewBox="0 0 14 12"><path d="M9.5 4V0.6H0.6V11.4H6 M2.5 3H7 M2.5 5.5H5 M2.5 8H4.5" stroke="#666" stroke-width="1" fill="none"/><circle cx="9" cy="8" r="2.6" stroke="#666" stroke-width="1" fill="none"/><path d="M10.9 9.9L13.2 11.8" stroke="#666" stroke-width="1.1"/></svg></span><span class="abs" style="left:58px;top:12px;line-height:0"><svg width="12" height="11" viewBox="0 0 12 11"><rect x="0.6" y="0.6" width="4" height="3.8" rx="1.9" stroke="#666" stroke-width="1.1" fill="none"/><rect x="7" y="0.6" width="4" height="3.8" rx="1.9" stroke="#666" stroke-width="1.1" fill="none"/><rect x="0.6" y="6.4" width="4" height="3.8" rx="1.9" stroke="#666" stroke-width="1.1" fill="none"/><rect x="7" y="6.4" width="4" height="3.8" rx="1.9" stroke="#666" stroke-width="1.1" fill="none"/></svg></span></div><div class="abs" style="left:0;top:288px;width:100px;height:32px;border-bottom:1px solid #e2e2e2"><span class="abs" style="left:29px;top:11px;line-height:0"><svg width="14" height="12" viewBox="0 0 14 12"><path d="M9.5 4V0.6H0.6V11.4H6 M2.5 3H7 M2.5 5.5H5 M2.5 8H4.5" stroke="#666" stroke-width="1" fill="none"/><circle cx="9" cy="8" r="2.6" stroke="#666" stroke-width="1" fill="none"/><path d="M10.9 9.9L13.2 11.8" stroke="#666" stroke-width="1.1"/></svg></span><span class="abs" style="left:58px;top:12px;line-height:0"><svg width="12" height="11" viewBox="0 0 12 11"><rect x="0.6" y="0.6" width="4" height="3.8" rx="1.9" stroke="#666" stroke-width="1.1" fill="none"/><rect x="7" y="0.6" width="4" height="3.8" rx="1.9" stroke="#666" stroke-width="1.1" fill="none"/><rect x="0.6" y="6.4" width="4" height="3.8" rx="1.9" stroke="#666" stroke-width="1.1" fill="none"/><rect x="7" y="6.4" width="4" height="3.8" rx="1.9" stroke="#666" stroke-width="1.1" fill="none"/></svg></span></div><div class="abs" style="left:0;top:320px;width:100px;height:32px;border-bottom:1px solid #e2e2e2"><span class="abs" style="left:29px;top:11px;line-height:0"><svg width="14" height="12" viewBox="0 0 14 12"><path d="M9.5 4V0.6H0.6V11.4H6 M2.5 3H7 M2.5 5.5H5 M2.5 8H4.5" stroke="#666" stroke-width="1" fill="none"/><circle cx="9" cy="8" r="2.6" stroke="#666" stroke-width="1" fill="none"/><path d="M10.9 9.9L13.2 11.8" stroke="#666" stroke-width="1.1"/></svg></span><span class="abs" style="left:58px;top:12px;line-height:0"><svg width="12" height="11" viewBox="0 0 12 11"><rect x="0.6" y="0.6" width="4" height="3.8" rx="1.9" stroke="#666" stroke-width="1.1" fill="none"/><rect x="7" y="0.6" width="4" height="3.8" rx="1.9" stroke="#666" stroke-width="1.1" fill="none"/><rect x="0.6" y="6.4" width="4" height="3.8" rx="1.9" stroke="#666" stroke-width="1.1" fill="none"/><rect x="7" y="6.4" width="4" height="3.8" rx="1.9" stroke="#666" stroke-width="1.1" fill="none"/></svg></span></div><div class="abs" style="left:0;top:352px;width:100px;height:32px;border-bottom:1px solid #e2e2e2"><span class="abs" style="left:29px;top:11px;line-height:0"><svg width="14" height="12" viewBox="0 0 14 12"><path d="M9.5 4V0.6H0.6V11.4H6 M2.5 3H7 M2.5 5.5H5 M2.5 8H4.5" stroke="#666" stroke-width="1" fill="none"/><circle cx="9" cy="8" r="2.6" stroke="#666" stroke-width="1" fill="none"/><path d="M10.9 9.9L13.2 11.8" stroke="#666" stroke-width="1.1"/></svg></span><span class="abs" style="left:58px;top:12px;line-height:0"><svg width="12" height="11" viewBox="0 0 12 11"><rect x="0.6" y="0.6" width="4" height="3.8" rx="1.9" stroke="#666" stroke-width="1.1" fill="none"/><rect x="7" y="0.6" width="4" height="3.8" rx="1.9" stroke="#666" stroke-width="1.1" fill="none"/><rect x="0.6" y="6.4" width="4" height="3.8" rx="1.9" stroke="#666" stroke-width="1.1" fill="none"/><rect x="7" y="6.4" width="4" height="3.8" rx="1.9" stroke="#666" stroke-width="1.1" fill="none"/></svg></span></div><div class="abs" style="left:0;top:384px;width:100px;height:32px;border-bottom:1px solid #e2e2e2"><span class="abs" style="left:29px;top:11px;line-height:0"><svg width="14" height="12" viewBox="0 0 14 12"><path d="M9.5 4V0.6H0.6V11.4H6 M2.5 3H7 M2.5 5.5H5 M2.5 8H4.5" stroke="#666" stroke-width="1" fill="none"/><circle cx="9" cy="8" r="2.6" stroke="#666" stroke-width="1" fill="none"/><path d="M10.9 9.9L13.2 11.8" stroke="#666" stroke-width="1.1"/></svg></span><span class="abs" style="left:58px;top:12px;line-height:0"><svg width="12" height="11" viewBox="0 0 12 11"><rect x="0.6" y="0.6" width="4" height="3.8" rx="1.9" stroke="#666" stroke-width="1.1" fill="none"/><rect x="7" y="0.6" width="4" height="3.8" rx="1.9" stroke="#666" stroke-width="1.1" fill="none"/><rect x="0.6" y="6.4" width="4" height="3.8" rx="1.9" stroke="#666" stroke-width="1.1" fill="none"/><rect x="7" y="6.4" width="4" height="3.8" rx="1.9" stroke="#666" stroke-width="1.1" fill="none"/></svg></span></div><div class="abs" style="left:0;top:416px;width:100px;height:32px;border-bottom:1px solid #e2e2e2"><span class="abs" style="left:29px;top:11px;line-height:0"><svg width="14" height="12" viewBox="0 0 14 12"><path d="M9.5 4V0.6H0.6V11.4H6 M2.5 3H7 M2.5 5.5H5 M2.5 8H4.5" stroke="#666" stroke-width="1" fill="none"/><circle cx="9" cy="8" r="2.6" stroke="#666" stroke-width="1" fill="none"/><path d="M10.9 9.9L13.2 11.8" stroke="#666" stroke-width="1.1"/></svg></span><span class="abs" style="left:58px;top:12px;line-height:0"><svg width="12" height="11" viewBox="0 0 12 11"><rect x="0.6" y="0.6" width="4" height="3.8" rx="1.9" stroke="#666" stroke-width="1.1" fill="none"/><rect x="7" y="0.6" width="4" height="3.8" rx="1.9" stroke="#666" stroke-width="1.1" fill="none"/><rect x="0.6" y="6.4" width="4" height="3.8" rx="1.9" stroke="#666" stroke-width="1.1" fill="none"/><rect x="7" y="6.4" width="4" height="3.8" rx="1.9" stroke="#666" stroke-width="1.1" fill="none"/></svg></span></div><div class="abs" style="left:0;top:448px;width:100px;height:32px;border-bottom:1px solid #e2e2e2"><span class="abs" style="left:29px;top:11px;line-height:0"><svg width="14" height="12" viewBox="0 0 14 12"><path d="M9.5 4V0.6H0.6V11.4H6 M2.5 3H7 M2.5 5.5H5 M2.5 8H4.5" stroke="#666" stroke-width="1" fill="none"/><circle cx="9" cy="8" r="2.6" stroke="#666" stroke-width="1" fill="none"/><path d="M10.9 9.9L13.2 11.8" stroke="#666" stroke-width="1.1"/></svg></span><span class="abs" style="left:58px;top:12px;line-height:0"><svg width="12" height="11" viewBox="0 0 12 11"><rect x="0.6" y="0.6" width="4" height="3.8" rx="1.9" stroke="#666" stroke-width="1.1" fill="none"/><rect x="7" y="0.6" width="4" height="3.8" rx="1.9" stroke="#666" stroke-width="1.1" fill="none"/><rect x="0.6" y="6.4" width="4" height="3.8" rx="1.9" stroke="#666" stroke-width="1.1" fill="none"/><rect x="7" y="6.4" width="4" height="3.8" rx="1.9" stroke="#666" stroke-width="1.1" fill="none"/></svg></span></div><div class="abs" style="left:0;top:480px;width:100px;height:32px;border-bottom:1px solid #e2e2e2"><span class="abs" style="left:29px;top:11px;line-height:0"><svg width="14" height="12" viewBox="0 0 14 12"><path d="M9.5 4V0.6H0.6V11.4H6 M2.5 3H7 M2.5 5.5H5 M2.5 8H4.5" stroke="#666" stroke-width="1" fill="none"/><circle cx="9" cy="8" r="2.6" stroke="#666" stroke-width="1" fill="none"/><path d="M10.9 9.9L13.2 11.8" stroke="#666" stroke-width="1.1"/></svg></span><span class="abs" style="left:58px;top:12px;line-height:0"><svg width="12" height="11" viewBox="0 0 12 11"><rect x="0.6" y="0.6" width="4" height="3.8" rx="1.9" stroke="#666" stroke-width="1.1" fill="none"/><rect x="7" y="0.6" width="4" height="3.8" rx="1.9" stroke="#666" stroke-width="1.1" fill="none"/><rect x="0.6" y="6.4" width="4" height="3.8" rx="1.9" stroke="#666" stroke-width="1.1" fill="none"/><rect x="7" y="6.4" width="4" height="3.8" rx="1.9" stroke="#666" stroke-width="1.1" fill="none"/></svg></span></div></div><div class="abs" style="left:1870px;top:228px;width:9px;height:253px;background:#b0b0b0;border-radius:5px"></div><div class="abs" style="left:145px;top:796px;width:1734px;height:1px;background:#f0f0f0"></div><span class="abs" style="left:1364px;top:766px;font-size:12px;line-height:16px">每页显示</span><div class="abs" style="left:1420px;top:758px;width:60px;height:32px;border:1px solid #d9d9d9;border-radius:3px;background:#fff"><span class="abs" style="left:8px;top:9px;font-size:12.5px;line-height:16px">50</span><svg class="abs" style="left:40px;top:12px" width="12" height="8"><path d="M0.6 0.8L6 6.2L11.4 0.8" stroke="#555" stroke-width="1.2" fill="none"/></svg></div><svg class="abs" style="left:1508px;top:768px" width="10" height="12"><path d="M1 0V12 M9 0.5L3 6L9 11.5" stroke="#aaa" stroke-width="1.2" fill="none"/></svg><svg class="abs" style="left:1535px;top:768px" width="9" height="12"><path d="M8 0.5L2 6L8 11.5" stroke="#aaa" stroke-width="1.2" fill="none"/></svg><span class="abs" style="left:1558px;top:766px;font-size:12px;line-height:16px">第</span><div class="abs" style="left:1578px;top:758px;width:60px;height:32px;border:1px solid #d9d9d9;border-radius:3px;background:#fff"><span class="abs" style="left:9px;top:8px;font-size:12.5px;line-height:16px">1</span></div><span class="abs" style="left:1646px;top:766px;font-size:12px;line-height:16px">页</span><svg class="abs" style="left:1673px;top:768px" width="9" height="12"><path d="M1 0.5L7 6L1 11.5" stroke="#aaa" stroke-width="1.2" fill="none"/></svg><svg class="abs" style="left:1699px;top:768px" width="10" height="12"><path d="M9 0V12 M1 0.5L7 6L1 11.5" stroke="#aaa" stroke-width="1.2" fill="none"/></svg><span class="abs" style="left:1733px;top:766px;font-size:12px;line-height:16px">共1页, 28条记录</span><div class="abs" style="left:1900px;top:52px;width:20px;height:757px;background:#f2f3f5"></div></body></html>
